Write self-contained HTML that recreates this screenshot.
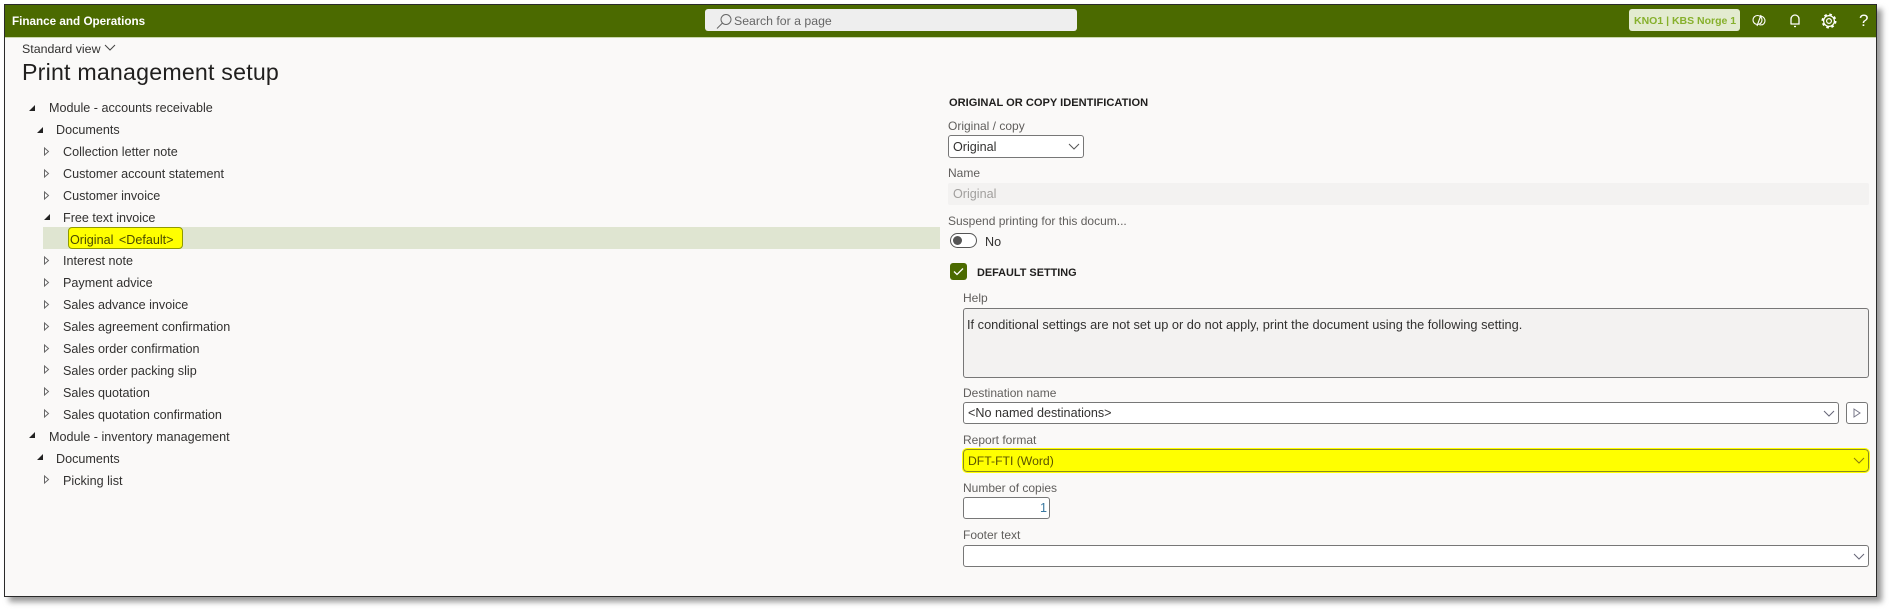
<!DOCTYPE html>
<html><head><meta charset="utf-8"><style>
html,body{margin:0;padding:0;background:#fff}
body{width:1890px;height:611px;position:relative;overflow:hidden;font-family:"Liberation Sans",sans-serif;color:#323130}
#shadow{position:absolute;left:9px;top:9px;width:1873px;height:593px;background:#999;filter:blur(3px)}
#frame{position:absolute;left:5px;top:5px;width:1871px;height:591px;background:#faf9f8;outline:1.5px solid #2a2a2a;overflow:hidden}
.a{position:absolute}
#root{position:absolute;left:0;top:0;width:1890px;height:611px}
.t{position:absolute;white-space:nowrap;line-height:16px;font-size:12.6px}
.l{color:#605e5c;font-size:12px}
.b{position:absolute;box-sizing:border-box;border:1px solid #777;border-radius:3px;background:#fff}
svg{position:absolute;overflow:visible}
</style></head><body>
<div id="shadow"></div><div id="frame"></div>
<div id="root">
<div class="a" style="left:5px;top:5px;width:1871px;height:32px;background:#4b6a00"></div>
<div class="a" style="left:5px;top:37px;width:1871px;height:1px;background:#c9d6ab"></div>
<div class="t" style="left:12px;top:14px;color:#fff;font-weight:bold;font-size:11.7px">Finance and Operations</div>
<div class="a" style="left:705px;top:9px;width:372px;height:22px;border-radius:3px;background:#eeeeee"></div>
<svg style="left:716px;top:13px" width="16" height="16" fill="none" stroke="#666" stroke-width="1"><circle cx="10" cy="6.5" r="5"/><path d="M6.5 10L1 15.5"/></svg>
<div class="t" style="left:734px;top:13px;color:#666;font-size:12.3px">Search for a page</div>
<div class="a" style="left:1629px;top:9px;width:111px;height:22px;border-radius:3px;background:#e3ebd0"></div>
<div class="t" style="left:1634px;top:13px;color:#86b02c;font-weight:bold;font-size:10.5px">KNO1 | KBS Norge 1</div>
<svg style="left:1751px;top:13px" width="16" height="15" fill="none" stroke="#fff" stroke-width="1.1"><circle cx="6.500" cy="7" r="4.500"/><path d="M9 3.200a4.500 4.500 0 0 1 2.500 8.500L8.500 12M10 2L6 13"/></svg>
<svg style="left:1788px;top:13px" width="14" height="15" fill="none" stroke="#fff" stroke-width="1.3"><path d="M3 11V6a4 4 0 0 1 8 0v5H2.5h9"/><path d="M6 13.5h2"/></svg>
<svg style="left:1821px;top:13px" width="16" height="16" fill="none" stroke="#fff"><circle cx="8" cy="8" r="2.4" stroke-width="1.2"/><circle cx="8" cy="8" r="5.4" stroke-width="1.2"/><circle cx="8" cy="8" r="6.6" stroke-width="1.8" stroke-dasharray="2.6 2.6"/></svg>
<div class="t" style="left:1859px;top:13px;color:#fff;font-size:17px">?</div>

<div class="t" style="left:22px;top:41px;font-size:12.4px">Standard view</div>
<svg style="left:104px;top:44px" width="12" height="8" fill="none" stroke="#444"><path d="M1 1l5 5 5-5"/></svg>
<div class="t" style="left:22px;top:58px;font-size:23.200px;line-height:28px;color:#201f1e;letter-spacing:.2px">Print management setup</div>

<div class="a" style="left:43px;top:227px;width:897px;height:22px;background:#dfe5d1"></div>
<div class="a" style="left:68px;top:227px;width:115px;height:22px;box-sizing:border-box;background:#ffff00;border:1.5px solid #8f9a00;border-radius:4px"></div>

<div class="t" style="left:49px;top:100px">Module - accounts receivable</div>
<div class="t" style="left:56px;top:122px">Documents</div>
<div class="t" style="left:63px;top:144px">Collection letter note</div>
<div class="t" style="left:63px;top:166px">Customer account statement</div>
<div class="t" style="left:63px;top:188px">Customer invoice</div>
<div class="t" style="left:63px;top:210px">Free text invoice</div>
<div class="t" style="left:70px;top:232px;color:#4a4a00;word-spacing:2px">Original &lt;Default&gt;</div>
<div class="t" style="left:63px;top:253px">Interest note</div>
<div class="t" style="left:63px;top:275px">Payment advice</div>
<div class="t" style="left:63px;top:297px">Sales advance invoice</div>
<div class="t" style="left:63px;top:319px">Sales agreement confirmation</div>
<div class="t" style="left:63px;top:341px">Sales order confirmation</div>
<div class="t" style="left:63px;top:363px">Sales order packing slip</div>
<div class="t" style="left:63px;top:385px">Sales quotation</div>
<div class="t" style="left:63px;top:407px">Sales quotation confirmation</div>
<div class="t" style="left:49px;top:429px">Module - inventory management</div>
<div class="t" style="left:56px;top:451px">Documents</div>
<div class="t" style="left:63px;top:473px">Picking list</div>

<svg style="left:0;top:0" width="200" height="500" fill="#222">
<path d="M29 111h6v-6zM37 133h6v-6zM44 220h6v-6zM29 438h6v-6zM37 460h6v-6z"/>
<g fill="#fff" stroke="#666" stroke-width="1"><path d="M44.5 148v7l4-3.500zM44.500 170v7l4-3.500zM44.500 192v7l4-3.500zM44.500 257v7l4-3.500zM44.500 279v7l4-3.500zM44.500 301v7l4-3.500zM44.500 323v7l4-3.500zM44.500 345v7l4-3.500zM44.500 366v7l4-3.500zM44.500 388v7l4-3.500zM44.500 410v7l4-3.500zM44.500 476v7l4-3.500z"/></g>
</svg>

<div class="t" style="left:949px;top:95px;font-weight:bold;font-size:11.1px;color:#201f1e">ORIGINAL OR COPY IDENTIFICATION</div>
<div class="t l" style="left:948px;top:118px">Original / copy</div>
<div class="b" style="left:948px;top:135px;width:136px;height:23px"></div>
<div class="t" style="left:953px;top:139px">Original</div>
<svg style="left:1068px;top:143px" width="12" height="8" fill="none" stroke="#555"><path d="M1 1l5 5 5-5"/></svg>
<div class="t l" style="left:948px;top:165px">Name</div>
<div class="a" style="left:948px;top:183px;width:921px;height:22px;background:#f3f2f1;border-radius:2px"></div>
<div class="t" style="left:953px;top:186px;color:#a19f9d">Original</div>
<div class="t l" style="left:948px;top:213px">Suspend printing for this docum...</div>
<div class="a" style="left:950px;top:233px;width:27px;height:15px;box-sizing:border-box;border:1px solid #555;border-radius:8px;background:#fff"></div>
<div class="a" style="left:953px;top:236px;width:9px;height:9px;border-radius:50%;background:#555"></div>
<div class="t" style="left:985px;top:234px;font-size:12.6px">No</div>
<div class="a" style="left:950px;top:263px;width:17px;height:17px;border-radius:3px;background:#4b6a00"></div>
<svg style="left:950px;top:263px" width="17" height="17" fill="none" stroke="#fff" stroke-width="1.300"><path d="M4 8.500l3 3 6-6"/></svg>
<div class="t" style="left:977px;top:265px;font-weight:bold;font-size:10.900px;color:#201f1e">DEFAULT SETTING</div>
<div class="t l" style="left:963px;top:290px">Help</div>
<div class="b" style="left:963px;top:308px;width:906px;height:70px;background:#f3f2f1"></div>
<div class="t" style="left:967px;top:317px;font-size:12.800px">If conditional settings are not set up or do not apply, print the document using the following setting.</div>
<div class="t l" style="left:963px;top:385px">Destination name</div>
<div class="b" style="left:963px;top:402px;width:876px;height:22px"></div>
<div class="t" style="left:968px;top:405px">&lt;No named destinations&gt;</div>
<svg style="left:1823px;top:410px" width="12" height="8" fill="none" stroke="#667"><path d="M1 1l5 5 5-5"/></svg>
<div class="b" style="left:1846px;top:402px;width:22px;height:22px"></div>
<svg style="left:1853px;top:408px" width="9" height="10" fill="none" stroke="#778"><path d="M1 1v8l6-4z"/></svg>
<div class="t l" style="left:963px;top:432px">Report format</div>
<div class="a" style="left:963px;top:449px;width:906px;height:23px;background:#ffff00;box-sizing:border-box;border:1px solid #8a8a20;border-radius:4px;outline:1.500px solid #ffff00"></div>
<div class="t" style="left:968px;top:453px;color:#5a5200;font-size:12.2px">DFT-FTI (Word)</div>
<svg style="left:1853px;top:457px" width="12" height="8" fill="none" stroke="#887a10"><path d="M1 1l5 5 5-5"/></svg>
<div class="t l" style="left:963px;top:480px">Number of copies</div>
<div class="b" style="left:963px;top:497px;width:87px;height:22px"></div>
<div class="t" style="left:1040px;top:500px;color:#3a78a0">1</div>
<div class="t l" style="left:963px;top:527px">Footer text</div>
<div class="b" style="left:963px;top:545px;width:906px;height:22px"></div>
<svg style="left:1853px;top:553px" width="12" height="8" fill="none" stroke="#667"><path d="M1 1l5 5 5-5"/></svg>
</div>
</body></html>
